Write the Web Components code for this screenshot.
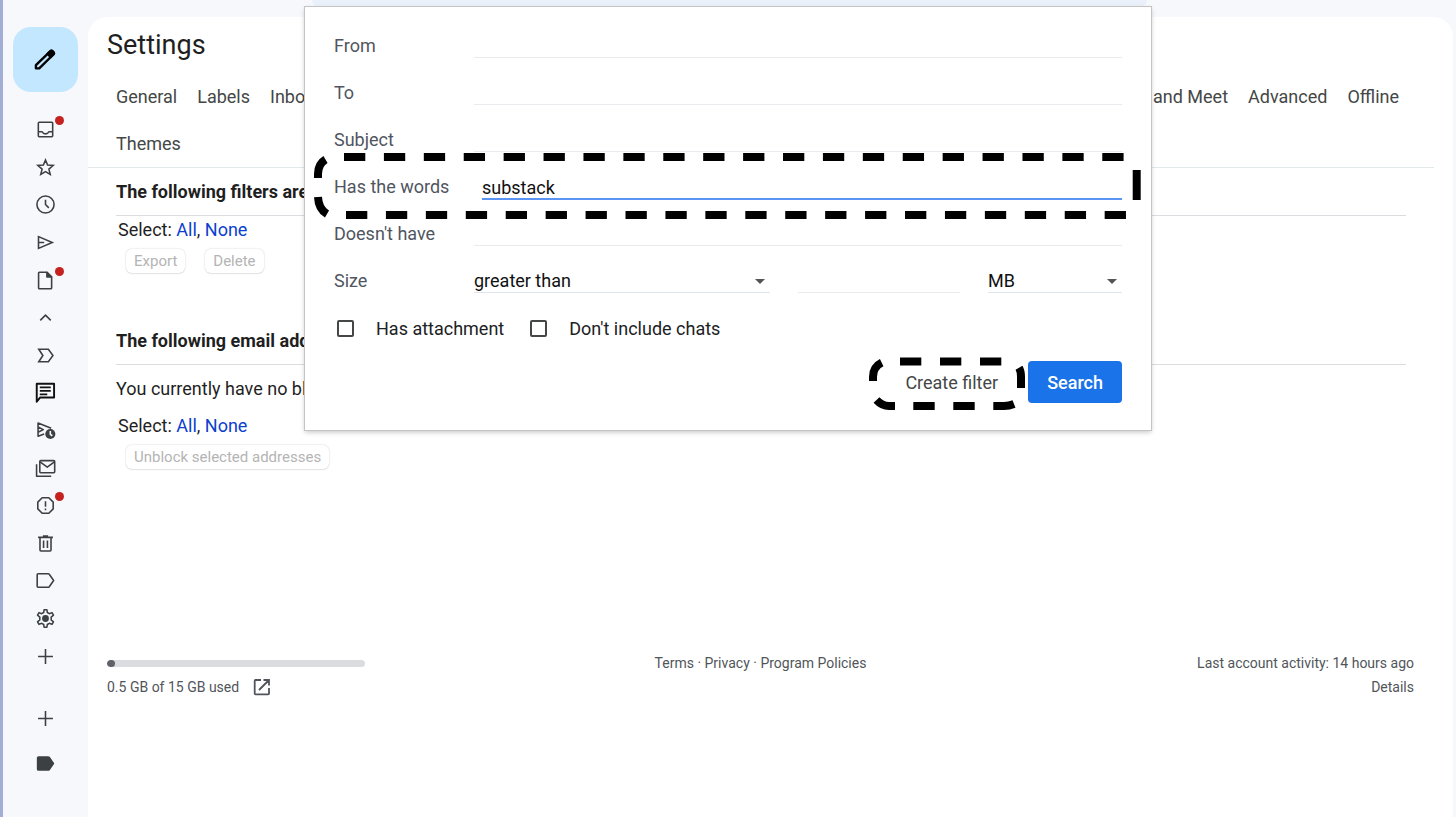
<!DOCTYPE html>
<html lang="en">
<head>
<meta charset="utf-8">
<title>Settings</title>
<style>
  body {
    margin: 0;
    font-family: Roboto, "Liberation Sans", sans-serif;
    font-size: 18px;
    color: #1f1f1f;
    background-color: #f6f8fc;
  }
</style>
</head>
<body>
<mail-app>
  <side-rail slot="rail">
    <rail-item icon="inbox" label="Inbox" badge></rail-item>
    <rail-item icon="star" label="Starred"></rail-item>
    <rail-item icon="clock" label="Snoozed"></rail-item>
    <rail-item icon="send" label="Sent"></rail-item>
    <rail-item icon="draft" label="Drafts" badge></rail-item>
    <rail-item icon="less" label="Less"></rail-item>
    <rail-item icon="important" label="Important"></rail-item>
    <rail-item icon="chat" label="Chats"></rail-item>
    <rail-item icon="scheduled" label="Scheduled"></rail-item>
    <rail-item icon="allmail" label="All mail"></rail-item>
    <rail-item icon="spam" label="Spam" badge></rail-item>
    <rail-item icon="trash" label="Trash"></rail-item>
    <rail-item icon="label" label="Categories"></rail-item>
    <rail-item icon="gear" label="Manage labels"></rail-item>
    <rail-item icon="plus" label="Create new label"></rail-item>
    <rail-item slot="labels" icon="plus" label="New label"></rail-item>
    <rail-item slot="labels" icon="tag" label="Label"></rail-item>
  </side-rail>

  <settings-page>
    <settings-tabs slot="tabs"></settings-tabs>
    <filter-section heading="The following filters are">
      <action-button>Export</action-button>
      <action-button>Delete</action-button>
    </filter-section>
    <filter-section heading="The following email addresses">
      <span slot="text">You currently have no blocked</span>
      <action-button>Unblock selected addresses</action-button>
    </filter-section>
    <page-footer slot="footer"></page-footer>
  </settings-page>

  <search-options slot="overlay">
    <text-field label="From"></text-field>
    <text-field label="To"></text-field>
    <text-field label="Subject"></text-field>
    <text-field label="Has the words" value="substack" active></text-field>
    <text-field label="Doesn't have"></text-field>
    <size-field></size-field>
    <check-field slot="checks" label="Has attachment"></check-field>
    <check-field slot="checks" label="Don't include chats"></check-field>
  </search-options>
</mail-app>

<script>
const icons = {
  inbox: '<rect x="3.8" y="3.8" width="16.4" height="16.4" rx="1"/><path d="M4 14.5h4.2c.7 1.7 2 2.5 3.8 2.5s3.1-.8 3.8-2.5H20"/>',
  star: '<path d="M12 3.4l2.4 5.8 6.3.5-4.8 4.1 1.5 6.1L12 16.7l-5.4 3.2 1.5-6.1-4.8-4.1 6.3-.5z" stroke-linejoin="miter"/>',
  clock: '<circle cx="12" cy="12" r="9.8"/><path d="M12 6.5V12l3.8 3.8"/>',
  send: '<path d="M4 5.3v13.4L19.7 12z M4 12h6.5" stroke-linejoin="miter"/>',
  draft: '<path d="M5 2.6h8.8l5.2 5.2v12.8c0 .5-.4.9-.9.9H5c-.5 0-.9-.4-.9-.9V3.5c0-.5.4-.9.9-.9z"/><path d="M13.6 2.8v5.2h5.2z" fill="currentColor"/>',
  less: '<path d="M6 15.3L12 9.3l6 6"/>',
  important: '<path d="M4.3 4.8h11l5.2 7.2-5.2 7.2h-11L9 12z" stroke-linejoin="miter"/>',
  chat: '<path d="M2 22.5V2h19.8v15.7H6z" stroke-width="2.2"/><path d="M5.5 6h12.5M5.5 10h12.5M5.5 14h8.5" stroke-width="2"/>',
  scheduled: '<path d="M18.5 9.5L3.5 3.5v15l7-2.6M3.5 8l6 3-6 3"/><circle cx="17.5" cy="16" r="5.8" fill="currentColor" stroke="none"/><path d="M17.5 12.7v3.6l2.3 1.7" stroke="#f6f8fc"/>',
  allmail: '<rect x="5.5" y="3" width="17" height="13.8" rx="1"/><path d="M5.8 4.5l8.2 6 8.2-6M1.8 7v13.8H18.5"/>',
  spam: '<path d="M8.2 3.2h7.6l5 5v7.6l-5 5H8.2l-5-5V8.2z"/><path d="M12 7v6.5M12 15.5v2"/>',
  trash: '<path d="M5.7 5v14.5c0 .6.4 1 1 1h10.6c.6 0 1-.4 1-1V5M3.5 5h17M9 3.5h6M9.8 8.5v8.5M14.2 8.5v8.5"/>',
  label: '<path d="M3.5 4.3h11.5c.6 0 1 .2 1.3.6L21.3 12l-5 7.1c-.3.4-.7.6-1.3.6H3.5c-.6 0-1-.4-1-1V5.3c0-.6.4-1 1-1z"/>',
  gear: '<path d="M9.9 5.2L10.4 2h3.2l.5 3.2 2.3 1.3 3-1.2 1.7 2.9-2.6 2.1v3.4l2.6 2.1-1.7 2.9-3-1.2-2.3 1.3-.5 3.2h-3.2l-.5-3.2-2.3-1.3-3 1.2-1.7-2.9 2.6-2.1v-3.4L2.9 8.2l1.7-2.9 3 1.2z"/><circle cx="12" cy="12" r="3.9" fill="currentColor" stroke="none"/>',
  plus: '<path d="M12 3.5v17M3.5 12h17"/>',
  tag: '<path d="M4 4.5h11c.6 0 1 .2 1.3.6L21 12l-4.7 6.9c-.3.4-.7.6-1.3.6H4c-.6 0-1-.4-1-1v-13c0-.6.4-1 1-1z" fill="currentColor"/>'
};

class MailApp extends HTMLElement {
  constructor() {
    super();
    this.attachShadow({ mode: 'open' }).innerHTML = `
    <style>
      :host {
        position: relative;
        display: flex;
        box-sizing: border-box;
        min-height: 100vh;
        padding: 17px 3px 0 0;
        border-left: 3px solid #a3aed4;
      }

      .search-bar {
        position: absolute;
        top: 0;
        left: 309px;
        right: 309px;
        height: 7px;
        border-radius: 0 0 24px 24px;
        background-color: #eaf1fb;
      }
    </style>
    <div class="search-bar"></div>
    <slot name="rail"></slot>
    <slot></slot>
    <slot name="overlay"></slot>
    `;
  }
}

class SideRail extends HTMLElement {
  constructor() {
    super();
    this.attachShadow({ mode: 'open' }).innerHTML = `
    <style>
      :host {
        flex: none;
        width: 85px;
      }

      nav {
        display: flex;
        flex-direction: column;
        align-items: center;
        padding-top: 10px;
      }

      .compose {
        display: grid;
        place-items: center;
        width: 65px;
        height: 65px;
        padding: 0;
        border: 0;
        border-radius: 18px;
        background-color: #c2e7ff;
        color: #000;
      }

      .folders {
        display: grid;
        grid-auto-rows: 1fr;
        min-height: 564px;
        margin-top: 19px;
      }

      .labels {
        display: grid;
        grid-auto-rows: 45px;
        margin-top: 21px;
      }
    </style>
    <nav>
      <button class="compose" aria-label="Compose">
        <svg width="25" height="25" viewBox="0 0 24 24" fill="none" stroke="currentColor" stroke-width="2.3" stroke-linejoin="round">
          <path d="M2.8 17.5L16.5 4.2c.8-.8 1.6-.8 2.4 0l.6.6c.8.8.8 1.6 0 2.4L6 20.5H2.8z"/>
          <path d="M14 6.5L16.5 4.2c.8-.8 1.6-.8 2.4 0l.6.6c.8.8.8 1.6 0 2.4L17 9.7z" fill="currentColor"/>
        </svg>
      </button>
      <div class="folders"><slot></slot></div>
      <div class="labels"><slot name="labels"></slot></div>
    </nav>
    `;
  }
}

class RailItem extends HTMLElement {
  connectedCallback() {
    const icon = this.getAttribute('icon');
    const badge = this.hasAttribute('badge') ? '<span class="badge"></span>' : '';

    this.attachShadow({ mode: 'open' }).innerHTML = `
    <style>
      :host {
        display: grid;
        place-items: center;
        color: #3c4043;
      }

      :host([icon="chat"]) {
        color: #111;
      }

      a {
        position: relative;
        display: block;
        color: inherit;
      }

      svg {
        display: block;
      }

      .badge {
        position: absolute;
        top: -3px;
        right: -8px;
        width: 9px;
        height: 9px;
        border-radius: 50%;
        background-color: #c5221f;
      }
    </style>
    <a href="#" aria-label="${this.getAttribute('label')}">
      <svg width="21" height="21" viewBox="0 0 24 24" fill="none" stroke="currentColor" stroke-width="1.8" stroke-linejoin="round">${icons[icon]}</svg>
      ${badge}
    </a>
    `;
  }
}

class SettingsPage extends HTMLElement {
  constructor() {
    super();
    this.attachShadow({ mode: 'open' }).innerHTML = `
    <style>
      :host {
        flex: 1;
        min-width: 0;
        border-radius: 20px 20px 0 0;
        background-color: #fff;
      }

      h1 {
        margin: 12px 19px;
        font-size: 27px;
        font-weight: 400;
        line-height: 32px;
      }

      .sections {
        display: flex;
        flex-direction: column;
        gap: 43px;
        margin: 0 47px 181px 28px;
      }
    </style>
    <h1>Settings</h1>
    <slot name="tabs"></slot>
    <div class="sections"><slot></slot></div>
    <slot name="footer"></slot>
    `;
  }
}

class SettingsTabs extends HTMLElement {
  constructor() {
    super();
    const tabs = ['General', 'Labels', 'Inbox', 'Chat and Meet', 'Advanced', 'Offline', 'Themes'];

    this.attachShadow({ mode: 'open' }).innerHTML = `
    <style>
      :host {
        display: block;
        margin-right: 19px;
        border-bottom: 1px solid #e3e9ea;
      }

      nav {
        display: grid;
        grid-template-columns: auto auto 1fr auto auto auto;
        column-gap: 20px;
        padding: 0 35px 0 28px;
      }

      a {
        color: #444746;
        line-height: 47px;
        text-decoration: none;
        white-space: nowrap;
      }

      /* second row: must not widen the first column */
      a:last-child {
        grid-column: 1 / -1;
      }
    </style>
    <nav>${tabs.map((tab) => `<a href="#">${tab}</a>`).join('')}</nav>
    `;
  }
}

class FilterSection extends HTMLElement {
  connectedCallback() {
    this.attachShadow({ mode: 'open' }).innerHTML = `
    <style>
      :host {
        display: block;
      }

      h2 {
        margin: 0;
        border-bottom: 1px solid #dadce0;
        font-size: 18px;
        font-weight: 700;
        line-height: 47px;
      }

      ::slotted([slot="text"]) {
        display: block;
        line-height: 47px;
      }

      .select {
        padding-left: 2px;
        line-height: 28px;
      }

      .select a {
        color: #0b40cf;
        text-decoration: none;
      }

      .actions {
        display: flex;
        gap: 20px;
        padding: 5px 0 1px 10px;
      }
    </style>
    <h2>${this.getAttribute('heading')}</h2>
    <slot name="text"></slot>
    <div class="select">Select: <a href="#">All</a>, <a href="#">None</a></div>
    <div class="actions"><slot></slot></div>
    `;
  }
}

class ActionButton extends HTMLElement {
  constructor() {
    super();
    this.attachShadow({ mode: 'open' }).innerHTML = `
    <style>
      :host {
        display: block;
      }

      button {
        display: block;
        height: 24px;
        padding: 0 8px;
        border: 0;
        border-radius: 6px;
        background-color: #fff;
        box-shadow: 0 0 2px rgba(0, 0, 0, 0.2), 0 1px 1px rgba(0, 0, 0, 0.06);
        color: #b4b4b4;
        font: inherit;
        font-size: 15px;
      }
    </style>
    <button disabled><slot></slot></button>
    `;
  }
}

class PageFooter extends HTMLElement {
  constructor() {
    super();
    this.attachShadow({ mode: 'open' }).innerHTML = `
    <style>
      :host {
        display: grid;
        grid-template-columns: 1fr auto 1fr;
        padding: 0 39px 0 19px;
        color: #51555a;
        font-size: 14px;
        line-height: 24px;
      }

      a {
        color: inherit;
        text-decoration: none;
      }

      .bar {
        display: flex;
        align-items: center;
        height: 24px;
      }

      progress {
        appearance: none;
        width: 258px;
        height: 7px;
        border: 0;
        border-radius: 4px;
        overflow: hidden;
      }

      progress::-webkit-progress-bar {
        background-color: #dadce0;
      }

      progress::-webkit-progress-value {
        border-radius: 4px;
        background-color: #5f6368;
      }

      .usage {
        display: flex;
        align-items: center;
        gap: 14px;
      }

      .usage svg {
        display: block;
      }

      .activity {
        text-align: right;
      }
    </style>
    <div>
      <div class="bar"><progress value="3" max="100" aria-label="Storage used"></progress></div>
      <div class="usage">
        <span>0.5 GB of 15 GB used</span>
        <a href="#" aria-label="Manage storage">
          <svg width="18" height="18" viewBox="0 0 18 18" fill="none" stroke="currentColor" stroke-width="1.8">
            <path d="M8 2H2.5c-.5 0-.8.3-.8.8v12.7c0 .5.3.8.8.8h12.7c.5 0 .8-.3.8-.8V10M10.5 2H16v5.5M16 2L6 12"/>
          </svg>
        </a>
      </div>
    </div>
    <div><a href="#">Terms</a> · <a href="#">Privacy</a> · <a href="#">Program Policies</a></div>
    <div class="activity">
      <div>Last account activity: 14 hours ago</div>
      <a href="#">Details</a>
    </div>
    `;
  }
}

class SearchOptions extends HTMLElement {
  constructor() {
    super();
    this.attachShadow({ mode: 'open' }).innerHTML = `
    <style>
      /* the panel drops down over the page; both offsets count from the page edge */
      :host {
        position: absolute;
        top: 7px;
        left: 302px;
        right: 305px;
        box-sizing: border-box;
        padding: 15px 29px 27px;
        background-color: #fff;
        box-shadow: 0 0 0 1px #c4c4c4, 0 2px 5px rgba(0, 0, 0, 0.25);
      }

      .checks {
        display: flex;
        align-items: center;
        gap: 26px;
        height: 48px;
        padding-left: 3px;
      }

      .buttons {
        display: flex;
        justify-content: flex-end;
        gap: 30px;
        margin-top: 9px;
      }

      button {
        height: 42px;
        padding: 0;
        border: 0;
        background: none;
        color: #444746;
        font: inherit;
      }

      .create {
        position: relative;
      }

      .search {
        padding: 0 19px;
        border-radius: 4px;
        background-color: #1a73e8;
        color: #fff;
        font-weight: 500;
      }

      .mark {
        position: absolute;
        top: -4px;
        right: -28px;
        pointer-events: none;
      }
    </style>
    <form>
      <slot></slot>
      <div class="checks"><slot name="checks"></slot></div>
      <div class="buttons">
        <button class="create" type="button">Create filter
          <svg class="mark" width="158" height="54" viewBox="868 357 158 54" fill="none" stroke="#000" stroke-width="8">
            <path d="M900 361.5H1002" stroke-dasharray="21.3 18.7"/>
            <path d="M873 381V377Q873 367 881.7 362.7"/>
            <path d="M876.5 400Q882 406 889 406H895"/>
            <path d="M913.3 406h21.4M953.3 406h21.4M993.3 406H1004Q1009 406 1014 404"/>
            <path d="M1019 367.7Q1021 371 1021 377V388"/>
          </svg>
        </button>
        <button class="search" type="button">Search</button>
      </div>
    </form>
    `;
  }
}

class TextField extends HTMLElement {
  connectedCallback() {
    const active = this.hasAttribute('active');
    const mark = active ? `
      <svg class="mark" viewBox="314 153 828 66" fill="none" stroke="#000" stroke-width="8">
        <path d="M344 157H1124" stroke-dasharray="21.3 18.61"/>
        <path d="M346 215H1127" stroke-dasharray="21.3 18.63"/>
        <path d="M318 178V174Q318 164 325.5 159.5"/>
        <path d="M318 197Q318.5 209 327 214"/>
        <path d="M1136.7 170v30"/>
      </svg>` : '';

    this.attachShadow({ mode: 'open' }).innerHTML = `
    <style>
      :host {
        position: relative;
        display: flex;
        align-items: center;
        height: 47px;
      }

      label {
        flex: none;
        width: 140px;
        color: #51555f;
      }

      input {
        flex: 1;
        min-width: 0;
        height: 24px;
        box-sizing: border-box;
        padding: 0;
        border: 0;
        border-bottom: 1px solid #e8eaed;
        outline: 0;
        background: none;
        color: #111;
        font: inherit;
      }

      :host([active]) input {
        height: 26px;
        margin-left: 8px;
        padding-top: 4px;
        border-bottom: 2px solid #5a94f5;
      }

      .mark {
        position: absolute;
        top: -10px;
        left: -20px;
        width: calc(100% + 40px);
        pointer-events: none;
      }
    </style>
    <label for="field">${this.getAttribute('label')}</label>
    <input id="field" type="text" value="${this.getAttribute('value') || ''}">
    ${mark}
    `;
  }
}

class SizeField extends HTMLElement {
  constructor() {
    super();
    this.attachShadow({ mode: 'open' }).innerHTML = `
    <style>
      :host {
        display: flex;
        align-items: center;
        height: 47px;
      }

      label {
        flex: none;
        width: 140px;
        color: #51555f;
      }

      .fields {
        flex: 1;
        display: grid;
        grid-template-columns: 1fr 162px 134px;
        gap: 28px;
      }

      .wrap {
        position: relative;
        display: block;
      }

      select, input {
        display: block;
        width: 100%;
        height: 24px;
        box-sizing: border-box;
        padding: 0;
        border: 0;
        border-bottom: 1px solid #dfe5ea;
        border-radius: 0;
        outline: 0;
        appearance: none;
        background: none;
        color: #111;
        font: inherit;
      }

      input {
        border-color: #e8eaed;
      }

      .wrap::after {
        content: "";
        position: absolute;
        top: 10px;
        right: 5px;
        border: 5px solid transparent;
        border-top-color: #555;
        border-bottom: 0;
        pointer-events: none;
      }
    </style>
    <label for="compare">Size</label>
    <div class="fields">
      <span class="wrap">
        <select id="compare">
          <option>greater than</option>
          <option>less than</option>
        </select>
      </span>
      <input type="text" aria-label="Size value">
      <span class="wrap">
        <select aria-label="Size unit">
          <option>MB</option>
          <option>KB</option>
          <option>Bytes</option>
        </select>
      </span>
    </div>
    `;
  }
}

class CheckField extends HTMLElement {
  connectedCallback() {
    this.attachShadow({ mode: 'open' }).innerHTML = `
    <style>
      :host {
        display: block;
      }

      label {
        display: flex;
        align-items: center;
        gap: 22px;
        color: #202124;
      }

      input {
        appearance: none;
        box-sizing: border-box;
        width: 17px;
        height: 17px;
        margin: 0;
        border: 2px solid #444746;
        border-radius: 2px;
      }

      input:checked {
        background-color: #444746;
      }
    </style>
    <label><input type="checkbox">${this.getAttribute('label')}</label>
    `;
  }
}

customElements.define('mail-app', MailApp);
customElements.define('side-rail', SideRail);
customElements.define('rail-item', RailItem);
customElements.define('settings-page', SettingsPage);
customElements.define('settings-tabs', SettingsTabs);
customElements.define('filter-section', FilterSection);
customElements.define('action-button', ActionButton);
customElements.define('page-footer', PageFooter);
customElements.define('search-options', SearchOptions);
customElements.define('text-field', TextField);
customElements.define('size-field', SizeField);
customElements.define('check-field', CheckField);
</script>
</body>
</html>
